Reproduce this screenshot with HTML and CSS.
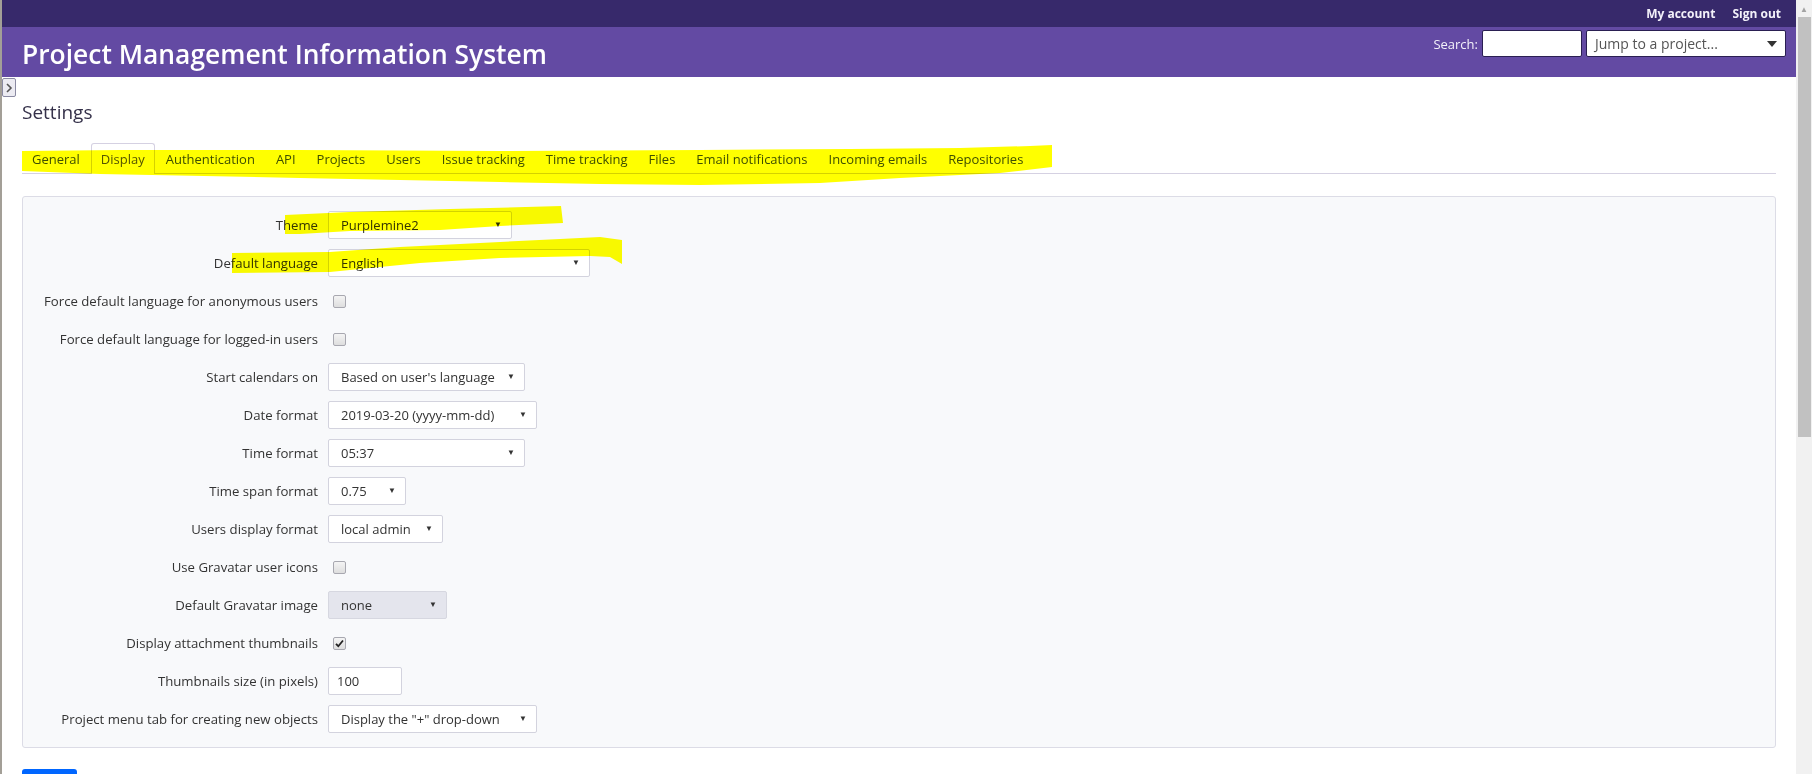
FILE: index.html
```html
<!DOCTYPE html>
<html lang="en">

<head>
    <meta charset="UTF-8">
    <title>Settings - Project Management Information System</title>
    <link rel="stylesheet" href="styles.css">
</head>

<body>
    <div class="page">
        <div id="top-menu">
            <a href="#">My account</a>
            <a href="#">Sign out</a>
        </div>

        <div id="header">
            <h1>Project Management Information System</h1>
            <div id="quick-search">
                <label for="q">Search:</label>
                <input type="text" id="q" class="q">
                <div class="jump">
                    <span>Jump to a project...</span>
                    <svg width="10" height="6" viewBox="0 0 10 6"><path d="M0 0h10L5 6z" fill="#333"/></svg>
                </div>
            </div>
        </div>

        <div class="sidebar-toggle">
            <svg width="8" height="10" viewBox="0 0 8 10"><path d="M2 1l4 4-4 4" fill="none" stroke="#555" stroke-width="1.6"/></svg>
        </div>

        <div id="content">
            <h2>Settings</h2>

            <ul class="tabs">
                <li><a href="#">General</a></li>
                <li class="selected"><a href="#">Display</a></li>
                <li><a href="#">Authentication</a></li>
                <li><a href="#">API</a></li>
                <li><a href="#">Projects</a></li>
                <li><a href="#">Users</a></li>
                <li><a href="#">Issue tracking</a></li>
                <li><a href="#">Time tracking</a></li>
                <li><a href="#">Files</a></li>
                <li><a href="#">Email notifications</a></li>
                <li><a href="#">Incoming emails</a></li>
                <li><a href="#">Repositories</a></li>
            </ul>

            <div class="box tabular">
                <div class="row">
                    <label>Theme</label>
                    <div class="select w-theme"><span>Purplemine2</span><span class="caret">&#9660;</span></div>
                </div>
                <div class="row">
                    <label>Default language</label>
                    <div class="select w-lang"><span>English</span><span class="caret">&#9660;</span></div>
                </div>
                <div class="row">
                    <label>Force default language for anonymous users</label>
                    <span class="check"></span>
                </div>
                <div class="row">
                    <label>Force default language for logged-in users</label>
                    <span class="check"></span>
                </div>
                <div class="row">
                    <label>Start calendars on</label>
                    <div class="select w-cal"><span>Based on user's language</span><span class="caret">&#9660;</span></div>
                </div>
                <div class="row">
                    <label>Date format</label>
                    <div class="select w-date"><span>2019-03-20 (yyyy-mm-dd)</span><span class="caret">&#9660;</span></div>
                </div>
                <div class="row">
                    <label>Time format</label>
                    <div class="select w-time"><span>05:37</span><span class="caret">&#9660;</span></div>
                </div>
                <div class="row">
                    <label>Time span format</label>
                    <div class="select w-span"><span>0.75</span><span class="caret">&#9660;</span></div>
                </div>
                <div class="row">
                    <label>Users display format</label>
                    <div class="select w-users"><span>local admin</span><span class="caret">&#9660;</span></div>
                </div>
                <div class="row">
                    <label>Use Gravatar user icons</label>
                    <span class="check"></span>
                </div>
                <div class="row">
                    <label>Default Gravatar image</label>
                    <div class="select w-grav disabled"><span>none</span><span class="caret">&#9660;</span></div>
                </div>
                <div class="row">
                    <label>Display attachment thumbnails</label>
                    <span class="check checked">
                        <svg width="9" height="9" viewBox="0 0 9 9"><path d="M1 4.8l2.3 2.4L8 1.5" fill="none" stroke="#222" stroke-width="1.8"/></svg>
                    </span>
                </div>
                <div class="row">
                    <label>Thumbnails size (in pixels)</label>
                    <input type="text" class="num" value="100">
                </div>
                <div class="row">
                    <label>Project menu tab for creating new objects</label>
                    <div class="select w-date"><span>Display the "+" drop-down</span><span class="caret">&#9660;</span></div>
                </div>
            </div>

            <button type="button" class="save">Save</button>
        </div>
    </div>

    <div class="scrollbar">
        <div class="sb-arrow">&#9650;</div>
        <div class="sb-thumb"></div>
    </div>

    <!-- marker strokes drawn over the screenshot -->
    <svg class="marker" width="1812" height="774" viewBox="0 0 1812 774">
        <polygon points="22,151 120,150 300,150 500,151 700,150 850,149 960,148 1030,146 1052,145 1052,167 1000,173 900,178 820,183 700,185 600,184 500,182 300,178 100,174 22,171"/>
        <polygon points="285,215 350,212 450,209 561,206 563,223 500,226 440,230 350,231 300,234 285,234"/>
        <polygon points="232,253 330,252 400,247 500,242 560,239 600,237 622,240 622,264 610,257 590,256 500,258 420,263 330,272 232,273"/>
    </svg>
</body>

</html>
```

FILE: styles.css
```css
html {
    height: 100%;
}

body {
    margin: 0;
    height: 774px;
    display: flex;
    overflow: hidden;
    border-left: 2px solid #a39f97;
    background: #fff;
    font-family: "Open Sans", "Liberation Sans", sans-serif;
    font-size: 13px;
    color: #333;
}

.page {
    flex: 1;
    min-width: 0;
}

/* top bar */
#top-menu {
    height: 27px;
    background: #37296b;
    display: flex;
    justify-content: flex-end;
    align-items: center;
    gap: 17px;
    padding-right: 15px;
}

#top-menu a {
    color: #f3f1fa;
    font-weight: 700;
    font-size: 12px;
    text-decoration: none;
}

#header {
    height: 50px;
    background: #634aa3;
    display: flex;
    justify-content: space-between;
    align-items: flex-start;
}

#header h1 {
    margin: 0;
    padding: 9px 0 0 20px;
    font-size: 26.4px;
    line-height: 36px;
    font-weight: 600;
    color: #fff;
}

#quick-search {
    display: flex;
    align-items: center;
    gap: 4px;
    margin: 3px 10px 0 0;
    color: #f3f1fa;
    font-size: 13px;
}

#quick-search .q {
    width: 100px;
    height: 27px;
    box-sizing: border-box;
    border: 1px solid #2a1f52;
    border-radius: 2px;
    margin: 0;
}

#quick-search .jump {
    width: 200px;
    height: 27px;
    box-sizing: border-box;
    border: 1px solid #2a1f52;
    border-radius: 2px;
    background: #fff;
    color: #555;
    font-size: 14px;
    display: flex;
    align-items: center;
    justify-content: space-between;
    padding: 0 8px 0 8px;
}

.sidebar-toggle {
    width: 14px;
    height: 19px;
    box-sizing: border-box;
    margin-top: 1px;
    border: 1px solid #8a8aa2;
    border-radius: 2px;
    background: #ecebf2;
    display: flex;
    align-items: center;
    justify-content: center;
}

#content {
    padding: 0 20px;
}

#content h2 {
    margin: 3px 0 0;
    font-size: 19px;
    line-height: 24px;
    font-weight: 400;
    color: #35314a;
}

/* tabs */
.tabs {
    list-style: none;
    margin: 19px 0 0;
    padding: 0;
    height: 30px;
    display: flex;
    border-bottom: 1px solid #d5d1e2;
}

.tabs li {
    margin-right: 1px;
}

.tabs a {
    display: block;
    height: 30px;
    line-height: 30px;
    padding: 0 9px;
    color: #3f4fc6;
    text-decoration: none;
    border: 1px solid transparent;
    border-bottom: none;
    border-radius: 3px 3px 0 0;
    box-sizing: border-box;
}

.tabs li.selected a {
    color: #555;
    border-color: #d5d1e2;
    height: 31px;
    background: #fff;
}

/* settings box */
.box {
    margin-top: 22px;
    border: 1px solid #dcdce6;
    border-radius: 3px;
    background: #f8f9fb;
    padding: 14px 0;
    display: flex;
    flex-direction: column;
    gap: 10px;
}

.row {
    display: grid;
    grid-template-columns: 295px 1fr;
    column-gap: 10px;
    align-items: center;
    height: 28px;
}

.row label {
    text-align: right;
    font-size: 13.2px;
    color: #333;
}

.select {
    height: 28px;
    box-sizing: border-box;
    border: 1px solid #d3d3de;
    border-radius: 2px;
    background: #fff;
    display: flex;
    align-items: center;
    justify-content: space-between;
    padding: 0 9px 0 12px;
    color: #333;
}

.select .caret {
    font-size: 8px;
    color: #333;
    margin-top: -3px;
}

.select.disabled {
    background: #e4e5ed;
    border-color: #d6d7e0;
}

.w-theme { width: 184px; }
.w-lang { width: 262px; }
.w-cal { width: 197px; }
.w-date { width: 209px; }
.w-time { width: 197px; }
.w-span { width: 78px; }
.w-users { width: 115px; }
.w-grav { width: 119px; }

.check {
    width: 13px;
    height: 13px;
    box-sizing: border-box;
    margin-left: 5px;
    border: 1px solid #a8a8b0;
    border-radius: 2px;
    background: linear-gradient(#f4f4f4, #dedede);
    display: flex;
    align-items: center;
    justify-content: center;
}

.num {
    width: 74px;
    height: 28px;
    box-sizing: border-box;
    margin: 0;
    border: 1px solid #d3d3de;
    border-radius: 2px;
    padding: 0 8px;
    font-family: inherit;
    font-size: 13px;
    color: #333;
}

.save {
    margin-top: 21px;
    width: 55px;
    height: 30px;
    border: none;
    border-radius: 3px;
    background: #0066ff;
    color: #fff;
    font-family: inherit;
    font-size: 13px;
}

/* fake scrollbar */
.scrollbar {
    width: 16px;
    background: #f1f1f1;
    display: flex;
    flex-direction: column;
    align-items: center;
}

.sb-arrow {
    height: 17px;
    line-height: 17px;
    font-size: 8px;
    color: #a3a3a3;
}

.sb-thumb {
    width: 13px;
    height: 420px;
    background: #c1c1c1;
}

/* yellow marker */
.marker {
    position: absolute;
    top: 0;
    left: 0;
    pointer-events: none;
    mix-blend-mode: multiply;
    fill: #ffff00;
}
```
